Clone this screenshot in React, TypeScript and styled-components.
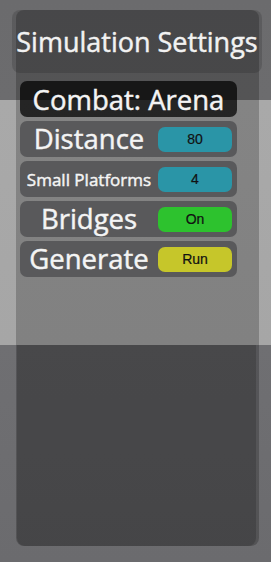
import styled, { createGlobalStyle } from "styled-components";

const GlobalStyle = createGlobalStyle`
  html, body {
    margin: 0;
    padding: 0;
  }
  body {
    font-family: "Open Sans", "Noto Sans", sans-serif;
  }
`;

const Screen = styled.div`
  width: 271px;
  min-height: 562px;
  box-sizing: border-box;
  padding: 10px 0 16px 16px;
  background: linear-gradient(
    to bottom,
    #6b6b6d 0px,
    #6c6c6e 100px,
    #a9a9a9 100px,
    #a6a6a6 345px,
    #6f6f72 345px,
    #6b6b6e 562px
  );
  display: flex;
  flex-direction: column;
  align-items: flex-start;
`;

const Panel = styled.div`
  width: 243px;
  height: 536px;
  background: rgba(0, 0, 0, 0.22);
  border-radius: 8px;
  display: flex;
  flex-direction: column;
`;

const Header = styled.div`
  margin: 0 -3px 0 -4px;
  height: 62px;
  padding-bottom: 1px;
  border-radius: 8px;
  background: rgba(0, 0, 0, 0.14);
  display: flex;
  align-items: center;
  justify-content: center;
  color: #f2f2f2;
  font-size: 27px;
  -webkit-text-stroke: 0.45px #f2f2f2;
  white-space: nowrap;
`;

const List = styled.div`
  margin: 8px 0 0 4px;
  width: 217px;
  display: flex;
  flex-direction: column;
  gap: 4px;
`;

const Mode = styled.div`
  height: 36px;
  border-radius: 7px;
  background: rgba(0, 0, 0, 0.72);
  display: flex;
  align-items: center;
  justify-content: center;
  color: #f4f4f4;
  font-size: 27.5px;
  -webkit-text-stroke: 0.45px #f4f4f4;
  white-space: nowrap;
`;

const Row = styled.div`
  height: 36px;
  box-sizing: border-box;
  padding: 5px 5px 5px 0;
  border-radius: 7px;
  background: #59595b;
  display: flex;
  align-items: center;
`;

const Label = styled.div<{ $size?: number }>`
  flex: 1;
  text-align: center;
  color: #f4f4f4;
  font-size: ${(p) => p.$size ?? 27.5}px;
  -webkit-text-stroke: 0.45px #f4f4f4;
  white-space: nowrap;
  line-height: 1;
`;

const Pill = styled.button<{ $color: string }>`
  width: 74px;
  height: 25px;
  border: none;
  border-radius: 7px;
  background: ${(p) => p.$color};
  color: #111;
  font-family: "Liberation Sans", Arial, sans-serif;
  font-size: 14px;
  -webkit-text-stroke: 0.2px #111;
  padding: 0;
`;

const Filler = styled.div`
  flex: 1;
  margin: 68px 3px 0 1px;
  border-radius: 0 0 8px 8px;
  background: rgba(0, 0, 0, 0.16);
`;

const settings = [
  { label: "Distance", value: "80", color: "#2a95a7" },
  { label: "Small Platforms", value: "4", color: "#2a95a7", size: 17 },
  { label: "Bridges", value: "On", color: "#2dc22e" },
  { label: "Generate", value: "Run", color: "#c6c62a" },
];

export default function App() {
  return (
    <>
      <GlobalStyle />
      <Screen>
        <Panel>
          <Header>Simulation Settings</Header>
          <List>
            <Mode>Combat: Arena</Mode>
            {settings.map((s) => (
              <Row key={s.label}>
                <Label $size={s.size}>{s.label}</Label>
                <Pill $color={s.color}>{s.value}</Pill>
              </Row>
            ))}
          </List>
          <Filler />
        </Panel>
      </Screen>
    </>
  );
}
